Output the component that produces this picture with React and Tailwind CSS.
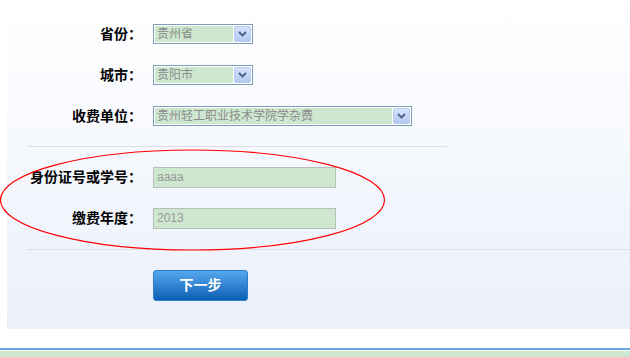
import React from 'react';

const font = { fontFamily: '"Liberation Sans", "Noto Sans CJK SC", sans-serif' };

function Arrow() {
  return (
    <div className="w-[17px] h-full rounded-[2px] border border-[#b9cdf0] bg-gradient-to-b from-[#d6e3fb] to-[#b3c9f1] flex items-center justify-center">
      <svg width="9" height="6" viewBox="0 0 9 6">
        <path d="M1 1 L4.5 4.5 L8 1" fill="none" stroke="#4a5e86" strokeWidth="1.8" />
      </svg>
    </div>
  );
}

function Select({ value, width }) {
  return (
    <div className={`${width} h-[20px] border border-[#7f9db9] bg-white p-[1px] flex gap-[1px]`}>
      <div className="flex-1 bg-[#cde8cf] text-[12px] leading-[16px] text-[#8c8c8c] pl-[2px]">{value}</div>
      <Arrow />
    </div>
  );
}

function Input({ value }) {
  return (
    <div className="w-[183px] h-[21px] border border-[#b7bdb8] bg-[#cde8cf] text-[12px] leading-[19px] text-[#999999] pl-[3px]">
      {value}
    </div>
  );
}

function Row({ label, children, className }) {
  return (
    <div className={`flex items-center ${className}`}>
      <div className="w-[135px] text-right font-bold text-[14px] text-black pr-[0px]">{label}</div>
      <div className="ml-[11px]">{children}</div>
    </div>
  );
}

export default function App() {
  return (
    <div className="relative w-[630px] h-[357px] bg-white overflow-hidden" style={font}>
      <div className="ml-[7px] w-[623px] h-[329px] bg-gradient-to-b from-white to-[#eaf0fa] flex flex-col pt-[24px]">
        <Row label="省份：" className="h-[20px]">
          <Select value="贵州省" width="w-[100px]" />
        </Row>
        <Row label="城市：" className="h-[20px] mt-[21px]">
          <Select value="贵阳市" width="w-[100px]" />
        </Row>
        <Row label="收费单位：" className="h-[20px] mt-[21px]">
          <Select value="贵州轻工职业技术学院学杂费" width="w-[259px]" />
        </Row>
        <div className="ml-[20px] mt-[20px] w-[420px] h-px bg-[#dcdfe5]" />
        <Row label="身份证号或学号：" className="h-[21px] mt-[20px]">
          <Input value="aaaa" />
        </Row>
        <Row label="缴费年度：" className="h-[21px] mt-[20px]">
          <Input value="2013" />
        </Row>
        <div className="ml-[20px] mt-[20px] flex-none h-px bg-[#dcdfe5]" />
        <div className="ml-[146px] mt-[20px]">
          <button className="w-[95px] h-[31px] rounded-[3px] bg-gradient-to-b from-[#55a8ec] to-[#0660b6] text-white font-bold text-[14px] border border-[#2d7fcc]">
            下一步
          </button>
        </div>
      </div>
      <div className="h-[19px]" />
      <div className="h-[2px] bg-[#6aa8e6]" />
      <div className="h-[1px] bg-white" />
      <div className="h-[10px] bg-[#cde8cf]" />
      <svg className="absolute left-0 top-0 pointer-events-none" width="630" height="357">
        <ellipse cx="192.5" cy="200" rx="192" ry="50" fill="none" stroke="#ff0000" strokeWidth="1.2" />
      </svg>
    </div>
  );
}
